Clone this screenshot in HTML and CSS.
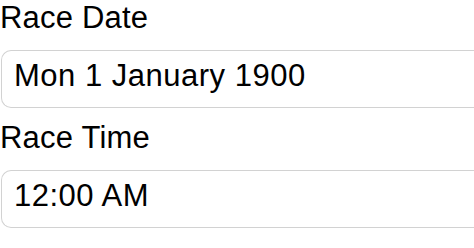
FILE: index.html
```html
<!DOCTYPE html>
<html lang="en">
<head>
<meta charset="utf-8">
<title>Race</title>
<link rel="stylesheet" href="styles.css">
</head>
<body>
<div class="form">
  <div class="row">
    <div class="label">Race Date</div>
    <div class="field">Mon 1 January 1900</div>
  </div>
  <div class="row">
    <div class="label">Race Time</div>
    <div class="field">12:00 AM</div>
  </div>
</div>
</body>
</html>
```
FILE: styles.css
```css
html, body {
  margin: 0;
  padding: 0;
  background: #ffffff;
}
body {
  font-family: "Liberation Sans", Arial, sans-serif;
  color: #000000;
}
.form {
  display: flex;
  flex-direction: column;
  gap: 12px;
}
.row {
  display: flex;
  flex-direction: column;
  gap: 14px;
}
.label {
  font-size: 31px;
  line-height: 36px;
  letter-spacing: 0.2px;
}
.field {
  font-size: 31px;
  line-height: 36px;
  letter-spacing: 0.5px;
  margin-left: 1px;
  box-sizing: border-box;
  height: 58px;
  padding: 7px 0 13px 12px;
  border: 1px solid #d2d2d2;
  border-right: none;
  border-radius: 10px 0 0 10px;
}
```
